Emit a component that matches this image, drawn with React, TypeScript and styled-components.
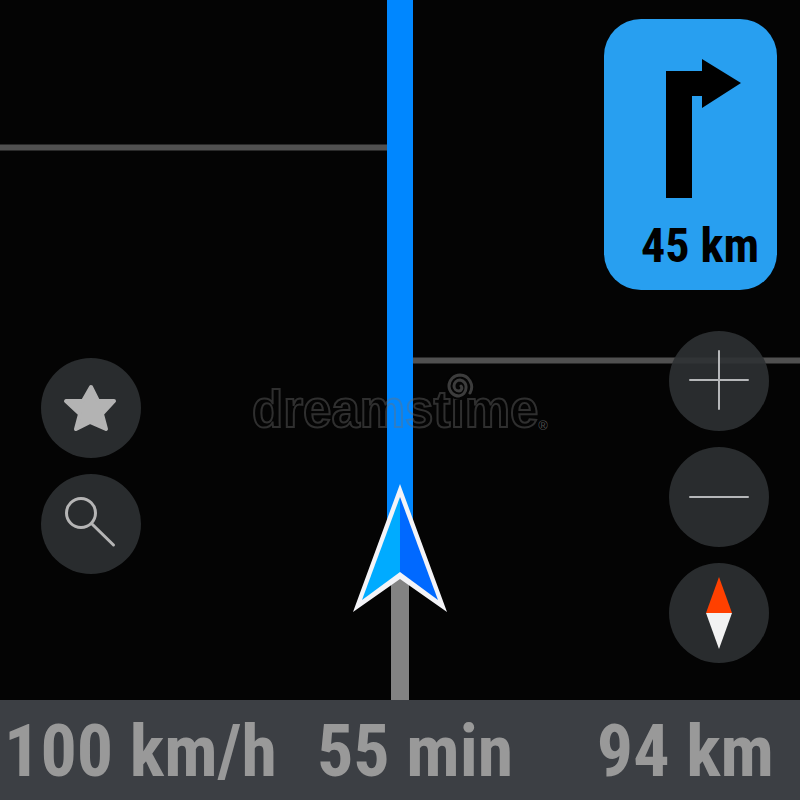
import React from "react";
import styled, { createGlobalStyle } from "styled-components";

const GlobalStyle = createGlobalStyle`
  *, *::before, *::after { box-sizing: border-box; }
  body { margin: 0; background: #040404; }
`;

const condensed = `"Roboto Condensed", "Liberation Sans Narrow", "Arial Narrow", "Liberation Sans", sans-serif`;

const Screen = styled.main`
  display: grid;
  grid-template-rows: 1fr auto;
  min-height: 100vh;
  overflow: hidden;
  background: #040404;
  font-family: ${condensed};
  font-weight: 700;
`;

const MapView = styled.section`
  position: relative;
  display: flex;
  justify-content: space-between;
  min-height: 700px;
`;

const MapDrawing = styled.svg`
  position: absolute;
  inset: 0;
  width: 100%;
  height: 100%;
`;

const SideColumn = styled.div<{ $end?: boolean }>`
  position: relative;
  display: flex;
  flex-direction: column;
  justify-content: ${(p) => (p.$end ? "space-between" : "flex-end")};
  align-items: ${(p) => (p.$end ? "flex-end" : "flex-start")};
  padding: ${(p) => (p.$end ? "19px 23px 37px 0" : "0 0 126px 41px")};
`;

const ControlGroup = styled.div<{ $inset?: boolean }>`
  display: flex;
  flex-direction: column;
  gap: 16px;
  margin-right: ${(p) => (p.$inset ? "8px" : "0")};
`;

const RoundButton = styled.button`
  width: 100px;
  height: 100px;
  padding: 0;
  border: 0;
  border-radius: 50%;
  background: rgba(45, 49, 51, 0.9);
  cursor: pointer;

  svg {
    display: block;
    width: 100%;
    height: 100%;
  }
`;

const TurnSign = styled.div`
  display: flex;
  flex-direction: column;
  align-items: flex-end;
  width: 173px;
  padding: 40px 18px 14px 0;
  border-radius: 37px;
  background: #289ff0;
  color: #000;
`;

const TurnArrow = styled.svg`
  width: 76px;
  height: 139px;
  margin-right: 18px;
`;

const TurnDistance = styled.span`
  margin-top: 18px;
  font-size: 48px;
  line-height: 60px;
  white-space: nowrap;
`;

const Watermark = styled.div`
  position: absolute;
  inset: 372px 0 auto;
  display: flex;
  justify-content: center;
  padding-top: 8px;
  pointer-events: none;
`;

const WatermarkWord = styled.span`
  font: 700 51px/60px "Liberation Sans", sans-serif;
  color: transparent;
  -webkit-text-stroke: 2px rgba(112, 112, 112, 0.4);
`;

const WatermarkMark = styled.span`
  align-self: flex-end;
  padding-bottom: 4px;
  font: 400 13px/20px "Liberation Sans", sans-serif;
  color: rgba(112, 112, 112, 0.7);
`;

const Swirl = styled.svg`
  position: absolute;
  top: 0;
  left: calc(50% + 46px);
  width: 28px;
  height: 28px;
`;

const TripBar = styled.footer`
  display: flex;
  gap: 40px;
  height: 100px;
  padding: 2px 26px 0 4px;
  background: #3c3f44;
  color: #999;
`;

const TripValue = styled.span`
  font-size: 72px;
  line-height: 100px;
  white-space: nowrap;

  &:last-child {
    margin-left: auto;
  }
`;

export default function App() {
  return (
    <Screen>
      <GlobalStyle />
      <MapView aria-label="Route map">
        <MapDrawing viewBox="0 0 800 700" preserveAspectRatio="xMidYMin slice" aria-hidden="true">
          <path d="M0 147.500H388M412 360.500H800" stroke="#505050" strokeWidth="6" />
          <path d="M391 570H409V700H391Z" fill="#838383" />
          <path d="M387 0H413V540H387Z" fill="#0087ff" />
          <path d="M400 484L447 612L400 579L353 612Z" fill="#f4f4f8" />
          <path d="M400 497V572L362 600Z" fill="#00abff" />
          <path d="M400 497V572L438 600Z" fill="#0069ff" />
        </MapDrawing>

        <Watermark>
          <WatermarkWord>dreamstime</WatermarkWord>
          <WatermarkMark>®</WatermarkMark>
          <Swirl viewBox="0 0 28 28" aria-hidden="true">
            <circle cx="14" cy="14" r="14" fill="#040404" />
            <path
              d="M24 21A12 12 0 0 0 14 3A11 11 0 0 0 3 14A10 10 0 0 0 13 24A8 8 0 0 0 20 16A7 7 0 0 0 14 8A6 6 0 0 0 8 14A5 5 0 0 0 13 19A3 3 0 0 0 15 14"
              fill="none"
              stroke="#3c3c3c"
              strokeWidth="3"
              strokeLinecap="round"
            />
          </Swirl>
        </Watermark>

        <SideColumn>
          <ControlGroup>
            <RoundButton type="button" aria-label="Favourites">
              <svg viewBox="0 0 100 100" aria-hidden="true">
                <path
                  d="M50 29L57 43H73L61 56L65 71L49 64L35 71L39 56L25 43H42Z"
                  fill="#b3b3b3"
                  stroke="#b3b3b3"
                  strokeWidth="4"
                  strokeLinejoin="round"
                />
              </svg>
            </RoundButton>
            <RoundButton type="button" aria-label="Search">
              <svg viewBox="0 0 100 100" fill="none" stroke="#b5b5b5" strokeWidth="3" strokeLinecap="round" aria-hidden="true">
                <circle cx="40" cy="39" r="14.500" />
                <path d="M51 50L72.500 71" />
              </svg>
            </RoundButton>
          </ControlGroup>
        </SideColumn>

        <SideColumn $end>
          <TurnSign>
            <TurnArrow viewBox="0 0 76 139" aria-label="Turn right" role="img">
              <path d="M1 12H37V0L76 24L37 49V37H27V139H1Z" fill="#000" />
            </TurnArrow>
            <TurnDistance>45 km</TurnDistance>
          </TurnSign>
          <ControlGroup $inset>
            <RoundButton type="button" aria-label="Zoom in">
              <svg viewBox="0 0 100 100" stroke="#b5b7b9" strokeWidth="2" strokeLinecap="round" aria-hidden="true">
                <path d="M21 49H79M50 20V78" />
              </svg>
            </RoundButton>
            <RoundButton type="button" aria-label="Zoom out">
              <svg viewBox="0 0 100 100" stroke="#b5b7b9" strokeWidth="2" strokeLinecap="round" aria-hidden="true">
                <path d="M21 50H79" />
              </svg>
            </RoundButton>
            <RoundButton type="button" aria-label="Compass">
              <svg viewBox="0 0 100 100" aria-hidden="true">
                <path d="M50 14L63 50H37Z" fill="#ff4000" />
                <path d="M37 50H63L50 86Z" fill="#f2f2f2" />
              </svg>
            </RoundButton>
          </ControlGroup>
        </SideColumn>
      </MapView>

      <TripBar>
        <TripValue>100 km/h</TripValue>
        <TripValue>55 min</TripValue>
        <TripValue>94 km</TripValue>
      </TripBar>
    </Screen>
  );
}
